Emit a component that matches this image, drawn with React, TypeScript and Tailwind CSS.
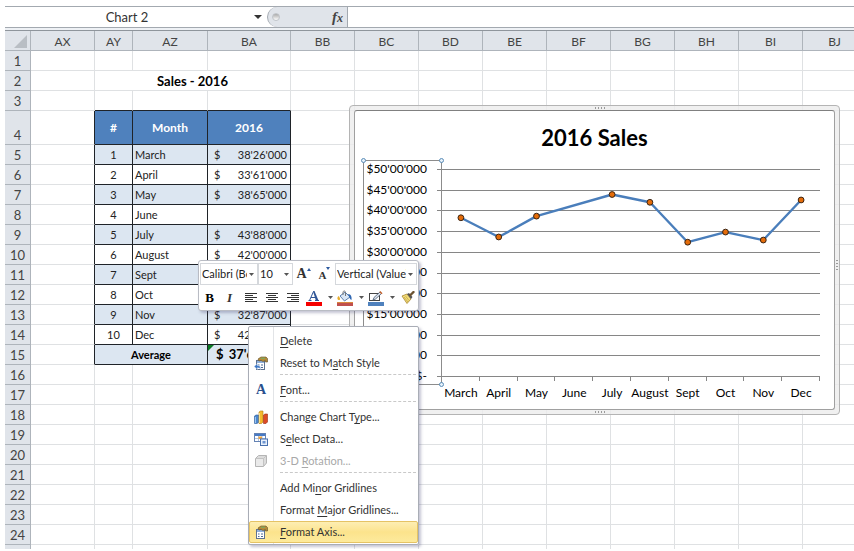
import React from "react";

const columns = ["AX", "AY", "AZ", "BA", "BB", "BC", "BD", "BE", "BF", "BG", "BH", "BI", "BJ"];
const trailingColumns = columns.slice(4);

const sales = [
  { month: "March", amount: "38'26'000", value: 38.26 },
  { month: "April", amount: "33'61'000", value: 33.61 },
  { month: "May", amount: "38'65'000", value: 38.65 },
  { month: "June", amount: "", value: null },
  { month: "July", amount: "43'88'000", value: 43.88 },
  { month: "August", amount: "42'00'000", value: 42.0 },
  { month: "Sept", amount: "32'35'000", value: 32.35 },
  { month: "Oct", amount: "34'80'000", value: 34.8 },
  { month: "Nov", amount: "32'87'000", value: 32.87 },
  { month: "Dec", amount: "42'56'000", value: 42.56 },
];

const axisLabels = [
  "$50'00'000", "$45'00'000", "$40'00'000", "$35'00'000", "$30'00'000", "$25'00'000",
  "$20'00'000", "$15'00'000", "$10'00'000", "$5'00'000", "$-",
];

const grid = "border-r border-b border-[#dfe1e3] p-0";
const dark = "border-r border-b border-[#1f2328] p-0";
const rowHead =
  "border-r border-b border-[#aeb4bb] bg-[#e0e4ea] p-0 pt-0.5 text-center align-bottom text-[13px] leading-[17px] font-normal text-[#444]";

function Blank({ names }: { names: string[] }) {
  return (
    <>
      {names.map((n) => (
        <td key={n} className={grid} />
      ))}
    </>
  );
}

function Sheet() {
  return (
    <table className="w-max table-fixed border-separate border-spacing-0">
      <colgroup>
        <col className="w-[26px]" />
        <col className="w-16" />
        <col className="w-[38px]" />
        <col className="w-[75px]" />
        <col className="w-[83px]" />
        {trailingColumns.map((n) => (
          <col key={n} className="w-16" />
        ))}
      </colgroup>
      <thead>
        <tr className="h-5">
          <th className="border-r border-b border-[#aeb4bb] bg-[#e0e4ea] p-0" aria-label="Select all">
            <svg className="mt-0.5 ml-[9px] block" width="13" height="13" viewBox="0 0 13 13">
              <path d="M13 0V13H0Z" fill="#b9bec4" />
            </svg>
          </th>
          {columns.map((n) => (
            <th
              key={n}
              scope="col"
              className="border-r border-b border-[#aeb4bb] bg-[#e0e4ea] p-0 pt-0.5 text-center text-[12px] leading-[17px] font-normal text-[#444]"
            >
              {n}
            </th>
          ))}
        </tr>
      </thead>
      <tbody>
        <tr className="h-5">
          <th scope="row" className={rowHead}>1</th>
          <Blank names={columns} />
        </tr>
        <tr className="h-5">
          <th scope="row" className={rowHead}>2</th>
          <td className={grid} />
          <td colSpan={3} className="border-r border-b border-[#dfe1e3] p-0 pt-0.5 text-center text-[13px] leading-[17px] font-bold text-black">
            Sales - 2016
          </td>
          <Blank names={trailingColumns} />
        </tr>
        <tr className="h-5">
          <th scope="row" className={rowHead}>3</th>
          <td className={grid} />
          {["AY", "AZ", "BA"].map((n) => (
            <td key={n} className="border-r border-b border-r-[#dfe1e3] border-b-[#1f2328] p-0" />
          ))}
          <Blank names={trailingColumns} />
        </tr>
        <tr className="h-[34px]">
          <th scope="row" className={rowHead}>4</th>
          <td className="border-r border-b border-r-[#1f2328] border-b-[#dfe1e3] p-0" />
          {["#", "Month", "2016"].map((n) => (
            <th key={n} className={`${dark} bg-[#4f81bd] text-center text-[12px] font-bold text-white`}>
              {n}
            </th>
          ))}
          <Blank names={trailingColumns} />
        </tr>
        {sales.map((s, i) => {
          const fill = i % 2 === 0 ? "bg-[#dce6f1]" : "bg-white";
          const cell = `${dark} ${fill} text-[11px] leading-[19px] text-[#222]`;
          return (
            <tr key={s.month} className="h-5">
              <th scope="row" className={rowHead}>{i + 5}</th>
              <td className="border-r border-b border-r-[#1f2328] border-b-[#dfe1e3] p-0" />
              <td className={`${cell} text-center`}>{i + 1}</td>
              <td className={cell}>
                <span className="pl-0.5">{s.month}</span>
              </td>
              <td className={cell}>
                {s.amount && (
                  <div className="flex justify-between pr-[3px] pl-1.5">
                    <span>$</span>
                    <span>{s.amount}</span>
                  </div>
                )}
              </td>
              <Blank names={trailingColumns} />
            </tr>
          );
        })}
        <tr className="h-5">
          <th scope="row" className={rowHead}>15</th>
          <td className="border-r border-b border-r-[#1f2328] border-b-[#dfe1e3] p-0" />
          <td colSpan={2} className={`${dark} bg-[#dce6f1] text-center text-[11px] leading-[19px] font-bold text-black`}>
            Average
          </td>
          <td className={`${dark} relative bg-[#dce6f1] text-[13px] leading-[19px] font-bold text-black`}>
            <svg className="absolute top-0 left-0" width="6" height="6" viewBox="0 0 6 6">
              <path d="M0 0H6L0 6Z" fill="#0b7a24" />
            </svg>
            <div className="flex justify-between pr-[3px] pl-2">
              <span>$</span>
              <span>37'66'444</span>
            </div>
          </td>
          <Blank names={trailingColumns} />
        </tr>
        {[16, 17, 18, 19, 20, 21, 22, 23, 24].map((r) => (
          <tr key={r} className="h-5">
            <th scope="row" className={rowHead}>{r}</th>
            <Blank names={columns} />
          </tr>
        ))}
        <tr className="h-1">
          <th className="border-r border-[#aeb4bb] bg-[#e0e4ea] p-0" />
          {columns.map((n) => (
            <td key={n} className="border-r border-[#dfe1e3] p-0" />
          ))}
        </tr>
      </tbody>
    </table>
  );
}

function FormulaBar() {
  return (
    <div className="flex h-[22px] border-y border-[#a3a9b0] bg-white">
      <input
        aria-label="Name box"
        defaultValue="Chart 2"
        className="w-[244px] min-w-0 bg-white pt-0.5 text-center text-[13px] text-[#333] outline-none"
      />
      <button type="button" aria-label="Open name list" className="flex w-[18px] items-center justify-center">
        <svg width="8" height="4" viewBox="0 0 8 4">
          <path d="M0 0H8L4 4Z" fill="#333" />
        </svg>
      </button>
      <div className="flex w-[81px] items-center justify-between rounded-l-full border-x border-[#a3a9b0] bg-[#e0e4ea] pr-1 pl-1">
        <span className="h-2 w-2 rounded-full border border-[#c0c4c9] bg-gradient-to-b from-[#aaa] to-white" />
        <button type="button" aria-label="Insert function" className="font-['Liberation_Serif',serif] text-[15px] leading-5 font-bold text-[#444] italic">
          f<span className="text-[12px]">x</span>
        </button>
      </div>
      <input aria-label="Formula" className="min-w-0 flex-1 bg-white px-1 text-[12px] outline-none" />
    </div>
  );
}

const PITCH = 37.8;
const yOf = (v: number) => 216 - v * 4.136;
const points = sales
  .map((s, i) => ({ x: PITCH * (i + 0.5), v: s.value }))
  .filter((p): p is { x: number; v: number } => p.v !== null);

function Plot() {
  return (
    <svg className="block overflow-visible" width="378" height="225" viewBox="0 0 378 225" role="img" aria-label="2016 sales by month">
      <g stroke="#868686" strokeWidth="1" shapeRendering="crispEdges">
        {axisLabels.map((l, i) => {
          const y = Math.round(9 + i * 20.7) + 0.5;
          return <line key={l} x1="-5" x2="378" y1={y} y2={y} />;
        })}
        {sales.map((s, i) => {
          const x = Math.round((i + 1) * PITCH) - 0.5;
          return <line key={s.month} x1={x} x2={x} y1="216" y2="221" />;
        })}
      </g>
      <polyline
        points={points.map((p) => `${p.x},${yOf(p.v)}`).join(" ")}
        fill="none"
        stroke="#4a7ebb"
        strokeWidth="2.4"
        strokeLinejoin="round"
      />
      {points.map((p) => (
        <circle key={p.x} cx={p.x} cy={yOf(p.v)} r="2.9" fill="#e46c0a" stroke="#3a2413" strokeWidth="1" />
      ))}
    </svg>
  );
}

function Handle({ place }: { place: string }) {
  return <span className={`absolute h-[5px] w-[5px] rounded-full border border-[#5b8db8] bg-[#e8f2fa] ${place}`} />;
}

function Grip({ place, upright = false }: { place: string; upright?: boolean }) {
  return (
    <span className={`absolute flex gap-0.5 ${upright ? "flex-col" : ""} ${place}`}>
      {[0, 1, 2, 3].map((n) => (
        <i key={n} className={upright ? "h-px w-0.5 bg-[#9a9a9a]" : "h-0.5 w-px bg-[#9a9a9a]"} />
      ))}
    </span>
  );
}

function Chart() {
  return (
    <section
      aria-label="Chart 2"
      className="absolute top-[105px] left-[349px] rounded-[4px] border border-[#b4b4b4] bg-[#ececec]/80 p-1"
    >
      <Grip place="top-px left-1/2" />
      <Grip place="bottom-px left-1/2" />
      <Grip place="top-1/2 left-px" upright />
      <Grip place="top-1/2 right-px" upright />
      <div className="h-[300px] w-[481px] rounded-[3px] border border-[#a0a0a0] border-t-[#808080] bg-white">
        <h2 className="h-[49px] pt-[11px] text-center text-[22px] leading-8 font-bold text-black">2016 Sales</h2>
        <div className="flex pl-2">
          <div className="relative flex h-[225px] w-[79px] flex-col justify-between border border-[#8c8c8c] pr-3.5 text-right text-[12px] leading-4 text-black">
            {axisLabels.map((l) => (
              <span key={l}>{l}</span>
            ))}
            <Handle place="-top-[3px] -left-[3px]" />
            <Handle place="-top-[3px] -right-[3px]" />
            <Handle place="-bottom-[3px] -left-[3px]" />
            <Handle place="-bottom-[3px] -right-[3px]" />
          </div>
          <div>
            <Plot />
            <div className="grid w-[378px] grid-cols-10 text-[12px] leading-4 text-black">
              {sales.map((s) => (
                <span key={s.month} className="flex justify-center">{s.month}</span>
              ))}
            </div>
          </div>
        </div>
      </div>
    </section>
  );
}

function Caret() {
  return (
    <svg className="pointer-events-none shrink-0" width="5" height="3" viewBox="0 0 5 3">
      <path d="M0 0H5L2.5 3Z" fill="#555" />
    </svg>
  );
}

function Pick({ label, value, width }: { label: string; value: string; width: string }) {
  return (
    <div className={`flex h-[22px] items-center border border-[#d5d8dc] bg-white pr-[3px] pl-px ${width}`}>
      <select aria-label={label} className="mr-0.5 min-w-0 flex-1 appearance-none overflow-hidden bg-transparent text-[11px] text-clip text-[#222] outline-none">
        <option>{value}</option>
      </select>
      <Caret />
    </div>
  );
}

function Align({ kind }: { kind: "left" | "center" | "right" }) {
  const wide = [12, 8, 12, 8, 12];
  return (
    <button type="button" aria-label={`Align ${kind}`} className="flex w-[21px] justify-center">
      <svg width="12" height="10" viewBox="0 0 12 10" shapeRendering="crispEdges">
        {wide.map((w, i) => {
          const x = kind === "left" ? 0 : kind === "center" ? (12 - w) / 2 : 12 - w;
          return <rect key={i} x={x} y={i * 2} width={w} height="1" fill="#333" />;
        })}
      </svg>
    </button>
  );
}

function MiniToolbar() {
  return (
    <div
      role="toolbar"
      aria-label="Formatting"
      className="absolute top-[260px] left-[198px] w-[221px] rounded-[3px] border border-[#b9bcc4] bg-white p-px shadow-[2px_2px_3px_rgba(60,60,110,0.3)]"
    >
      <div className="flex h-6 items-center">
        <Pick label="Font" value="Calibri (Body)" width="w-[58px]" />
        <Pick label="Font size" value="10" width="w-[35px]" />
        <button type="button" aria-label="Grow font" className="flex w-[21px] justify-center font-['Liberation_Serif',serif] text-[14px] leading-4 font-bold text-[#333]">
          A
          <svg className="mt-0.5" width="4" height="3" viewBox="0 0 4 3"><path d="M0 3L2 0L4 3Z" fill="#2d5aa0" /></svg>
        </button>
        <button type="button" aria-label="Shrink font" className="flex w-[21px] justify-center pt-0.5 font-['Liberation_Serif',serif] text-[11px] leading-4 font-bold text-[#333]">
          A
          <svg width="4" height="3" viewBox="0 0 4 3"><path d="M0 0L2 3L4 0Z" fill="#2d5aa0" /></svg>
        </button>
        <Pick label="Chart element" value="Vertical (Value) Axis" width="w-[82px]" />
      </div>
      <div className="flex h-[23px] items-center">
        <button type="button" aria-label="Bold" className="w-[19px] font-['Liberation_Serif',serif] text-[13px] font-black text-black">B</button>
        <button type="button" aria-label="Italic" className="w-[21px] font-['Liberation_Serif',serif] text-[13px] font-bold text-[#333] italic">I</button>
        <Align kind="left" />
        <Align kind="center" />
        <Align kind="right" />
        <button type="button" aria-label="Font color" className="flex w-[33px] items-center gap-1.5 pl-0.5">
          <svg width="17" height="16" viewBox="0 0 17 16">
            <path d="M3.500 10.500H6.500M10 10.500H14" stroke="#2f5597" />
            <path d="M4.500 10.500L8.500 1.500" stroke="#2f5597" />
            <path d="M8 1H9.500L13.500 10.500H10.800Z" fill="#2f5597" />
            <path d="M6 7.500H11" stroke="#2f5597" />
            <rect x="1" y="12" width="16" height="4" fill="#f50000" />
          </svg>
          <Caret />
        </button>
        <button type="button" aria-label="Fill color" className="flex w-[31px] items-center gap-1.5">
          <svg width="17" height="16" viewBox="0 0 17 16">
            <path d="M4 6L9 2L14 7L8.500 11Z" fill="#d9e6f5" stroke="#5b7fae" />
            <path d="M7 5V2.500C7 .5 9.500 .5 9.500 2.500V6" fill="none" stroke="#777" />
            <path d="M12 4C15 4 16 7 15.500 10C13.500 9.500 13.500 7 12 4Z" fill="#2f67b2" />
            <path d="M2.500 6C.5 8 1.500 10 3 10S4.500 8 2.500 6Z" fill="#e8ae2e" />
            <rect x="1" y="12" width="16" height="4" fill="#c0504d" />
            <path d="M1 12.500H17" stroke="#d9893c" />
          </svg>
          <Caret />
        </button>
        <button type="button" aria-label="Outline color" className="flex w-[31px] items-center gap-1.5">
          <svg width="17" height="16" viewBox="0 0 17 16">
            <rect x="2.500" y="3.500" width="10" height="7" fill="#fff" stroke="#444" />
            <path d="M6 10L7 7.500L13 2L14.500 3.500L8.500 9Z" fill="#dfe6ef" stroke="#42566f" strokeWidth=".8" />
            <path d="M12.800 1.500L15 3.700" stroke="#c2622f" strokeWidth="1.600" />
            <rect x="1" y="12" width="16" height="4" fill="#4f81bd" />
          </svg>
          <Caret />
        </button>
        <button type="button" aria-label="Format painter" className="flex w-[19px] justify-center">
          <svg width="14" height="13" viewBox="0 0 14 13">
            <path d="M1 5L6 3L10 8L6 12.500Z" fill="#f2dd7a" stroke="#a8872f" strokeWidth=".8" />
            <path d="M3 6L7 11M4.500 5L8 9.500" stroke="#b99838" strokeWidth=".6" />
            <path d="M6 3L8 2L11.500 6L10 8Z" fill="#555" />
            <path d="M9.500 4L12.500 1" stroke="#6c5330" strokeWidth="2.400" strokeLinecap="round" />
          </svg>
        </button>
      </div>
    </div>
  );
}

function PropertiesIcon({ reset = false }: { reset?: boolean }) {
  return (
    <svg width="14" height="14" viewBox="0 0 14 14">
      <rect x="2.500" y="4.500" width="8" height="9" fill="#fff" stroke="#5f7390" />
      <rect x="3" y="5" width="7" height="2" fill="#8fb0dc" />
      <path d="M4 9H5.500M7 9H9M4 11.500H5.500M7 11.500H9" stroke="#4c6a94" />
      <path d="M4 3L7 1H12L13.500 2.500V6H11.500V4.500L9 5.500L7 4.500L5 5Z" fill="#b48b37" stroke="#5f4d28" strokeWidth=".6" />
      <path d="M7 2.300H11" stroke="#83a65d" strokeWidth="1.400" />
      {reset && <path d="M0 10.500L3.500 7.500V9.500C6 9.500 7 11 6.500 13.500C6 12 5 11.700 3.500 11.700V13.500Z" fill="#3d78c8" stroke="#fff" strokeWidth=".4" />}
    </svg>
  );
}

function FontIcon() {
  return <span aria-hidden="true" className="font-['Liberation_Serif',serif] text-[14px] leading-4 font-bold text-[#29508e]">A</span>;
}

function ChartTypeIcon() {
  return (
    <svg width="14" height="14" viewBox="0 0 14 14">
      <path d="M.5 6L2 5H4.500V12.500L3 13.500H.5Z" fill="#4c87cd" stroke="#2c5d9e" strokeWidth=".6" />
      <path d="M5 2L6.500 1H9V12L7.500 13.500H5Z" fill="#f4b92c" stroke="#b47a10" strokeWidth=".6" />
      <path d="M9.500 5L11 4H13.500V12L12 13.500H9.500Z" fill="#dc4a25" stroke="#9c2c12" strokeWidth=".6" />
      <path d="M5.500 3V13" stroke="#fbe08a" />
      <path d="M1.500 7V13" stroke="#9cc4f0" />
    </svg>
  );
}

function SelectDataIcon() {
  return (
    <svg width="14" height="14" viewBox="0 0 14 14">
      <rect x=".5" y="1.500" width="11" height="8" fill="#fff" stroke="#6583b4" />
      <rect x="1" y="2" width="10" height="2" fill="#477ac5" />
      <path d="M1 6.500H11M4.500 4V9M8 4V9" stroke="#9cb4d8" strokeWidth=".8" />
      <rect x="4.500" y="4.500" width="3.500" height="2.500" fill="#f0a540" />
      <rect x="6.500" y="7" width="7" height="6.500" fill="#e8f0fb" stroke="#4870ad" />
      <rect x="8.500" y="9" width="3" height="2.500" fill="#6d94cf" />
    </svg>
  );
}

function CubeIcon() {
  return (
    <svg width="14" height="14" viewBox="0 0 14 14">
      <path d="M1.500 4.500L4.500 1.500H12.500V9L9.500 12.500H1.500Z" fill="#dcdcdc" stroke="#b5b5b5" />
      <path d="M1.500 4.500H9.500L12.500 1.500M9.500 4.500V12.500" stroke="#c3c3c3" fill="none" />
      <path d="M2 5H9V12H2Z" fill="#eaeaea" />
    </svg>
  );
}

type Item = { before: string; key: string; after: string; icon?: React.ReactNode; off?: boolean; hot?: boolean; rule?: boolean };

const menu: Item[] = [
  { before: "", key: "D", after: "elete" },
  { before: "Reset to M", key: "a", after: "tch Style", icon: <PropertiesIcon reset />, rule: true },
  { before: "", key: "F", after: "ont...", icon: <FontIcon />, rule: true },
  { before: "Change Chart T", key: "y", after: "pe...", icon: <ChartTypeIcon /> },
  { before: "S", key: "e", after: "lect Data...", icon: <SelectDataIcon /> },
  { before: "3-D ", key: "R", after: "otation...", icon: <CubeIcon />, off: true, rule: true },
  { before: "Add Mi", key: "n", after: "or Gridlines" },
  { before: "Format ", key: "M", after: "ajor Gridlines..." },
  { before: "", key: "F", after: "ormat Axis...", icon: <PropertiesIcon />, hot: true },
];

function ContextMenu() {
  return (
    <div
      role="menu"
      className="absolute top-[326px] left-[248px] w-[171px] rounded-[2px] border border-[#a9adb6] bg-[linear-gradient(90deg,#fff_24px,#e2e4e7_24px,#e2e4e7_25px,#fff_25px)] pt-[3px] pb-px text-[11px] text-[#333] shadow-[2px_2px_3px_rgba(60,60,110,0.3)]"
    >
      {menu.map((m) => (
        <React.Fragment key={m.before + m.key + m.after}>
          <button
            type="button"
            role="menuitem"
            disabled={m.off}
            className={`flex h-[22px] w-full items-center gap-2 border text-left whitespace-nowrap ${
              m.hot ? "rounded-[2px] border-[#e5c365] bg-gradient-to-b from-[#fdeeb3] via-[#fce38c] to-[#fdea9c]" : "border-transparent"
            } ${m.off ? "text-[#a8a8a8]" : ""}`}
          >
            <span className="flex w-[22px] justify-center">{m.icon}</span>
            <span>
              {m.before}
              <span className="underline underline-offset-2">{m.key}</span>
              {m.after}
            </span>
          </button>
          {m.rule && <div role="separator" className="mr-0.5 ml-[31px] h-[5px] border-t border-dashed border-[#c9c9c9]" />}
        </React.Fragment>
      ))}
    </div>
  );
}

export default function App() {
  return (
    <main className="relative overflow-hidden bg-white pt-1.5 pl-[5px] font-['Lato',sans-serif]">
      <FormulaBar />
      <div className="h-[3px] border-b border-[#8f959c] bg-[#eef1f5]" />
      <Sheet />
      <Chart />
      <MiniToolbar />
      <ContextMenu />
    </main>
  );
}
